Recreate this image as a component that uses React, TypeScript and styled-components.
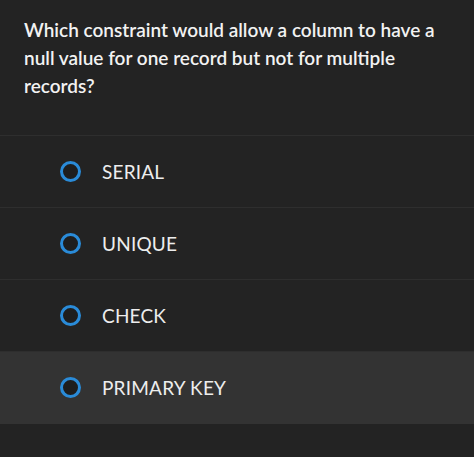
import React from "react";
import styled, {createGlobalStyle} from "styled-components";

const GlobalStyle = createGlobalStyle`
  html, body {
    margin: 0;
    padding: 0;
    background: #232323;
  }
  body {
    font-family: "Lato", "Open Sans", sans-serif;
    -webkit-font-smoothing: antialiased;
  }
`

const options = ["SERIAL", "UNIQUE", "CHECK", "PRIMARY KEY"]

const App = () => {
  return <Page>
    <GlobalStyle/>
    <Question>
      Which constraint would allow a column to have a null value for one record but not for multiple records?
    </Question>
    <OptionList>
      {options.map((v, i) => <Option key={v} $active={i === 3}>
        <Radio/>
        <Label>{v}</Label>
      </Option>)}
    </OptionList>
  </Page>
}

const Page = styled.div`
  width: 474px;
  height: 457px;
  background: #232323;
  overflow: hidden;
`

const Question = styled.div`
  box-sizing: border-box;
  height: 136px;
  padding: 16px 30px 0 24px;
  color: #f2f2f2;
  font-size: 19px;
  font-weight: 600;
  line-height: 28px;
  border-bottom: 1px solid #2e2e2e;
`

const OptionList = styled.div`
  display: flex;
  flex-direction: column;
`

const Option = styled.div<{ $active?: boolean }>`
  box-sizing: border-box;
  height: 72px;
  display: flex;
  align-items: center;
  padding-left: 60px;
  gap: 21px;
  background: ${p => p.$active ? "#333333" : "#232323"};
  border-bottom: 1px solid ${p => p.$active ? "#333333" : "#2e2e2e"};
`

const Radio = styled.span`
  box-sizing: border-box;
  width: 21px;
  height: 21px;
  border-radius: 50%;
  border: 3px solid #2a8bd8;
  background: #1e1e1e;
`

const Label = styled.span`
  color: #ededed;
  font-size: 19px;
  font-weight: 400;
  letter-spacing: 0.2px;
`

export default App;
